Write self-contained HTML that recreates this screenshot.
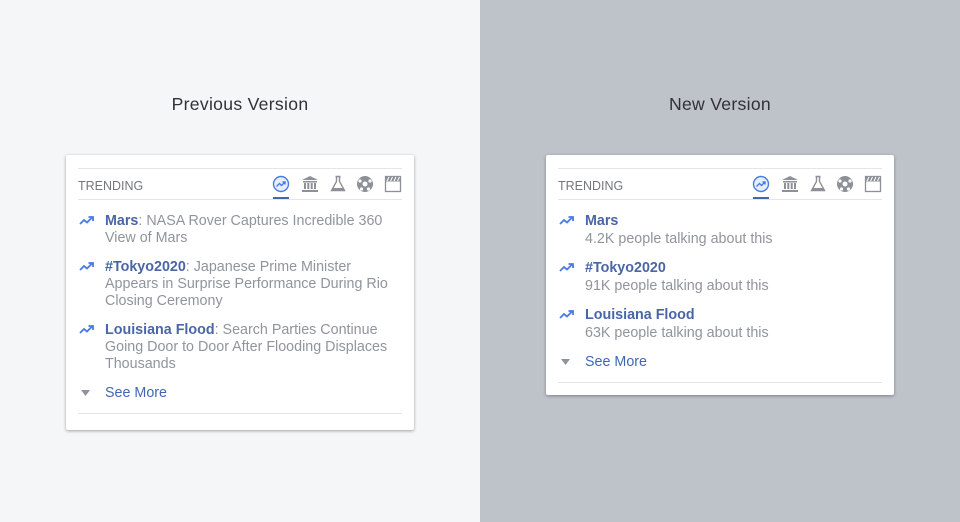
<!DOCTYPE html>
<html><head><style>
*{margin:0;padding:0;box-sizing:border-box}
body{width:960px;height:522px;position:relative;font-family:"Liberation Sans",sans-serif;overflow:hidden}
.l{position:absolute;left:0;top:0;width:480px;height:522px;background:#f5f6f8}
.r{position:absolute;left:480px;top:0;width:480px;height:522px;background:#bec2c9}
.h{position:absolute;top:94px;font-size:17.6px;color:#2f3237;width:480px;text-align:center;letter-spacing:0.3px}
.card{position:absolute;background:#fff;box-shadow:0 1px 3px rgba(0,0,0,.35);border-radius:2px}
.ln{position:absolute;left:12px;right:12px;height:1px;background:#e3e5e9}
.t{position:absolute;left:12px;top:24px;font-size:12.5px;color:#73777e}
.tx{position:absolute;left:39px;font-size:14.3px;line-height:17px;white-space:nowrap;color:#90949c}
.b{color:#4267b2}
.bb{color:#4a66a6;font-weight:bold}
.ar{position:absolute;left:13px}
.ic{position:absolute;top:20px}
</style></head><body>
<div class="l"><div class="h">Previous Version</div></div>
<div class="r"><div class="h">New Version</div></div>

<!-- left card -->
<div class="card" style="left:66px;top:155px;width:348px;height:275px">
<div class="ln" style="top:13px"></div>
<div class="t">TRENDING</div>
<div class="ln" style="top:44px"></div>
<div style="position:absolute;left:207px;top:42px;width:16px;height:2px;background:#4267b2"></div>
<svg class="ic" style="left:206px" width="18" height="18" viewBox="0 0 18 18"><circle cx="9" cy="9" r="7.5" fill="#e7eefb" stroke="#4a7be0" stroke-width="1.4"/><path d="M4.5 11.5l3-3 2 2 3.5-3.5M10.5 7h2.5v2.5" fill="none" stroke="#4a7be0" stroke-width="1.4"/></svg>
<svg class="ic" style="left:235px" width="18" height="18" viewBox="0 0 18 18" fill="#8d9096"><path d="M9 1l8 4H1z"/><rect x="2" y="6" width="14" height="1.5"/><rect x="3" y="8" width="2" height="6"/><rect x="6.3" y="8" width="2" height="6"/><rect x="9.7" y="8" width="2" height="6"/><rect x="13" y="8" width="2" height="6"/><rect x="1" y="15" width="16" height="2"/></svg>
<svg class="ic" style="left:263px" width="18" height="18" viewBox="0 0 18 18"><path d="M6.5 1.5h5M7.5 1.5v5L2.5 15.5h13L10.5 6.5v-5" fill="none" stroke="#8d9096" stroke-width="1.4"/><path d="M4 13h10l1 2H3z" fill="#8d9096"/></svg>
<svg class="ic" style="left:290px" width="18" height="18" viewBox="0 0 18 18"><circle cx="9" cy="9" r="8" fill="#8d9096"/><circle cx="9" cy="9" r="2.5" fill="#fff"/><circle cx="4" cy="6" r="1.6" fill="#fff"/><circle cx="14" cy="6" r="1.6" fill="#fff"/><circle cx="5.5" cy="14" r="1.6" fill="#fff"/><circle cx="12.5" cy="14" r="1.6" fill="#fff"/></svg>
<svg class="ic" style="left:318px" width="18" height="18" viewBox="0 0 18 18"><rect x="1.5" y="1.5" width="15" height="15" fill="#fff" stroke="#8d9096" stroke-width="1.3"/><rect x="1.5" y="1.5" width="15" height="5" fill="#8d9096"/><path d="M3 6l2-4M6.5 6l2-4M10 6l2-4M13.5 6l2-4" stroke="#fff" stroke-width="1"/></svg>

<svg class="ar" style="top:60px" width="15" height="11" viewBox="0 0 15 11"><path d="M1 9l4-4 3 2.5 5-5M9.5 2h4.5v4" fill="none" stroke="#4a7be0" stroke-width="1.8"/></svg>
<div class="tx" style="top:58px"><span class="bb">Mars</span>: NASA Rover Captures Incredible 360</div>
<div class="tx" style="top:75px">View of Mars</div>
<svg class="ar" style="top:106px" width="15" height="11" viewBox="0 0 15 11"><path d="M1 9l4-4 3 2.5 5-5M9.5 2h4.5v4" fill="none" stroke="#4a7be0" stroke-width="1.8"/></svg>
<div class="tx" style="top:104px"><span class="bb">#Tokyo2020</span>: Japanese Prime Minister</div>
<div class="tx" style="top:121px">Appears in Surprise Performance During Rio</div>
<div class="tx" style="top:138px">Closing Ceremony</div>
<svg class="ar" style="top:169px" width="15" height="11" viewBox="0 0 15 11"><path d="M1 9l4-4 3 2.5 5-5M9.5 2h4.5v4" fill="none" stroke="#4a7be0" stroke-width="1.8"/></svg>
<div class="tx" style="top:167px"><span class="bb">Louisiana Flood</span>: Search Parties Continue</div>
<div class="tx" style="top:184px">Going Door to Door After Flooding Displaces</div>
<div class="tx" style="top:201px">Thousands</div>
<svg class="ar" style="top:235px;left:15px" width="9" height="6" viewBox="0 0 9 6"><path d="M0 0h9L4.5 6z" fill="#90949c"/></svg>
<div class="tx b" style="top:230px">See More</div>
<div class="ln" style="top:258px"></div>
</div>

<!-- right card -->
<div class="card" style="left:546px;top:155px;width:348px;height:240px">
<div class="ln" style="top:13px"></div>
<div class="t">TRENDING</div>
<div class="ln" style="top:44px"></div>
<div style="position:absolute;left:207px;top:42px;width:16px;height:2px;background:#4267b2"></div>
<svg class="ic" style="left:206px" width="18" height="18" viewBox="0 0 18 18"><circle cx="9" cy="9" r="7.5" fill="#e7eefb" stroke="#4a7be0" stroke-width="1.4"/><path d="M4.5 11.5l3-3 2 2 3.5-3.5M10.5 7h2.5v2.5" fill="none" stroke="#4a7be0" stroke-width="1.4"/></svg>
<svg class="ic" style="left:235px" width="18" height="18" viewBox="0 0 18 18" fill="#8d9096"><path d="M9 1l8 4H1z"/><rect x="2" y="6" width="14" height="1.5"/><rect x="3" y="8" width="2" height="6"/><rect x="6.3" y="8" width="2" height="6"/><rect x="9.7" y="8" width="2" height="6"/><rect x="13" y="8" width="2" height="6"/><rect x="1" y="15" width="16" height="2"/></svg>
<svg class="ic" style="left:263px" width="18" height="18" viewBox="0 0 18 18"><path d="M6.5 1.5h5M7.5 1.5v5L2.5 15.5h13L10.5 6.5v-5" fill="none" stroke="#8d9096" stroke-width="1.4"/><path d="M4 13h10l1 2H3z" fill="#8d9096"/></svg>
<svg class="ic" style="left:290px" width="18" height="18" viewBox="0 0 18 18"><circle cx="9" cy="9" r="8" fill="#8d9096"/><circle cx="9" cy="9" r="2.5" fill="#fff"/><circle cx="4" cy="6" r="1.6" fill="#fff"/><circle cx="14" cy="6" r="1.6" fill="#fff"/><circle cx="5.5" cy="14" r="1.6" fill="#fff"/><circle cx="12.5" cy="14" r="1.6" fill="#fff"/></svg>
<svg class="ic" style="left:318px" width="18" height="18" viewBox="0 0 18 18"><rect x="1.5" y="1.5" width="15" height="15" fill="#fff" stroke="#8d9096" stroke-width="1.3"/><rect x="1.5" y="1.5" width="15" height="5" fill="#8d9096"/><path d="M3 6l2-4M6.5 6l2-4M10 6l2-4M13.5 6l2-4" stroke="#fff" stroke-width="1"/></svg>

<svg class="ar" style="top:60px" width="15" height="11" viewBox="0 0 15 11"><path d="M1 9l4-4 3 2.5 5-5M9.5 2h4.5v4" fill="none" stroke="#4a7be0" stroke-width="1.8"/></svg>
<div class="tx" style="top:58px"><span class="bb">Mars</span></div>
<div class="tx" style="top:76px">4.2K people talking about this</div>
<svg class="ar" style="top:107px" width="15" height="11" viewBox="0 0 15 11"><path d="M1 9l4-4 3 2.5 5-5M9.5 2h4.5v4" fill="none" stroke="#4a7be0" stroke-width="1.8"/></svg>
<div class="tx" style="top:105px"><span class="bb">#Tokyo2020</span></div>
<div class="tx" style="top:123px">91K people talking about this</div>
<svg class="ar" style="top:154px" width="15" height="11" viewBox="0 0 15 11"><path d="M1 9l4-4 3 2.5 5-5M9.5 2h4.5v4" fill="none" stroke="#4a7be0" stroke-width="1.8"/></svg>
<div class="tx" style="top:152px"><span class="bb">Louisiana Flood</span></div>
<div class="tx" style="top:170px">63K people talking about this</div>
<svg class="ar" style="top:204px;left:15px" width="9" height="6" viewBox="0 0 9 6"><path d="M0 0h9L4.5 6z" fill="#90949c"/></svg>
<div class="tx b" style="top:199px">See More</div>
<div class="ln" style="top:227px"></div>
</div>
</body></html>
